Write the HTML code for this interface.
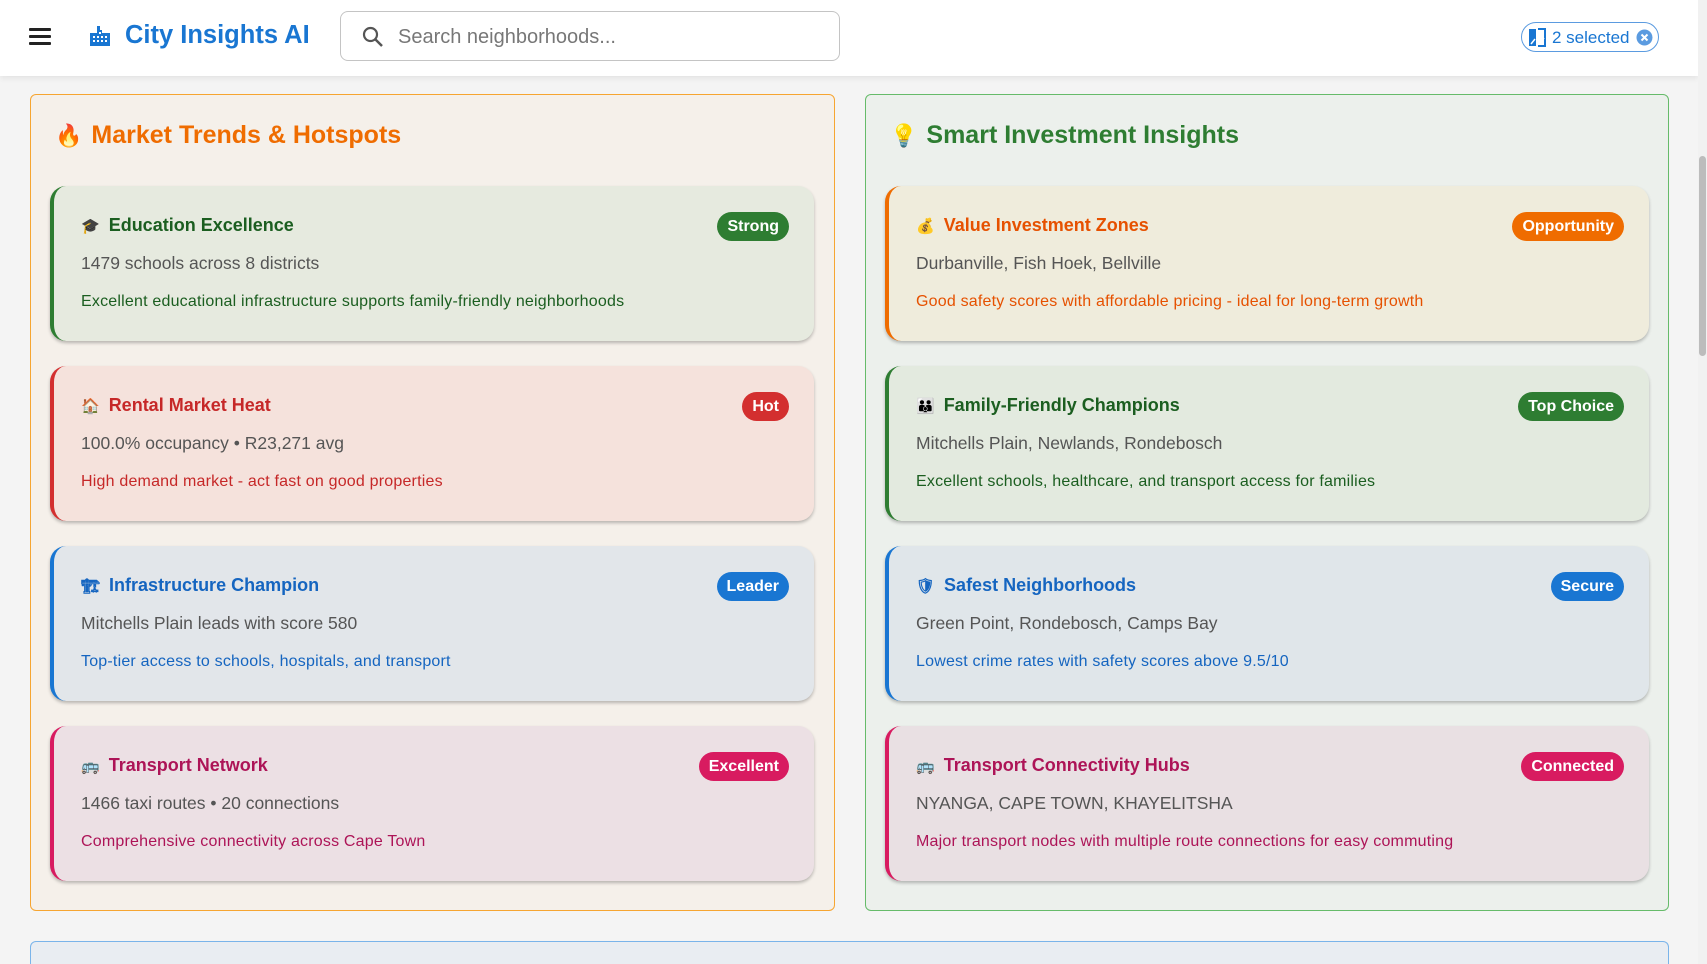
<!DOCTYPE html>
<html style="overflow:hidden;height:964px"><head><meta charset="utf-8"><style>
*{box-sizing:border-box;margin:0;padding:0}
body{width:1707px;height:964px;overflow:hidden;background:#f4f4f4;font-family:"Liberation Sans",sans-serif;position:relative}
.hdr{position:absolute;left:0;top:0;width:1698px;height:76px;background:#fff;box-shadow:0 2px 6px rgba(0,0,0,.08)}
.ham{position:absolute;left:29px;top:28px;width:22px}
.ham i{display:block;height:3px;background:#222;margin-bottom:4px;border-radius:1px}
.title{position:absolute;left:125px;top:21px;font-size:25.5px;font-weight:700;color:#1976d2}
.search{position:absolute;left:340px;top:11px;width:500px;height:50px;border:1px solid #c4c4c4;border-radius:8px;background:#fff}
.search span{position:absolute;left:57px;top:14px;font-size:20px;color:#777}
.chip{position:absolute;left:1521px;top:22px;width:138px;height:30px;border:1px solid #5b9be0;border-radius:15px}
.chip span{position:absolute;left:30px;top:5px;font-size:17px;color:#1976d2}
.panel{position:absolute;top:94px;height:817px;border-radius:6px}
.p1{left:30px;width:805px;background:#f5f0ea;border:1px solid #f6a531}
.p2{left:865px;width:804px;background:#ecf0ec;border:1px solid #66bb6a}
.ph{position:absolute;left:24px;top:26px;font-size:25px;font-weight:700}
.ph b{font-weight:400;margin-right:9px;font-size:22px}
.card{position:absolute;left:19px;width:764px;height:155px;border-radius:16px;border-left:4px solid;box-shadow:0 2px 3px rgba(0,0,0,.25)}
.ct{position:absolute;left:27px;top:29px;font-size:18px;font-weight:700}
.ct b{font-size:15px;margin-right:9px}
.c2{position:absolute;left:27px;top:67px;font-size:17.5px;color:#555}
.c3{position:absolute;left:27px;top:107px;font-size:16px;letter-spacing:.2px}
.bd{position:absolute;right:25px;top:26px;height:29px;padding:0 10px;border-radius:15px;color:#fff;font-weight:700;font-size:16px;line-height:29px}
.bot{position:absolute;left:30px;top:941px;width:1639px;height:23px;border:1px solid #7ab4ea;border-bottom:none;border-radius:6px 6px 0 0;background:#e9edf2}
.sb{position:absolute;left:1698px;top:0;width:9px;height:964px;background:#f1f1f1}
.sb i{position:absolute;left:1px;top:156px;width:7px;height:200px;background:#bcbcbc;border-radius:4px}
</style></head><body>
<div class="hdr">
<div class="ham"><i></i><i></i><i></i></div>
<svg style="position:absolute;left:88px;top:24px" width="24" height="24" viewBox="0 0 24 24"><path fill="#1976d2" d="M9 2h3v4h2v3h8v13H2V9h7zM5 12v2h2v-2zm0 4v2h2v-2zm4-4v2h2v-2zm0 4v2h2v-2zm4-4v2h2v-2zm0 4v2h2v-2zm4-4v2h2v-2zm0 4v2h2v-2zM11 8v2h2V8z"/></svg>
<div class="title">City Insights AI</div>
<div class="search"><svg style="position:absolute;left:20px;top:13px" width="24" height="24" viewBox="0 0 24 24"><circle cx="9.5" cy="9.5" r="6.5" fill="none" stroke="#555" stroke-width="2.2"/><path d="M14.5 14.5L21 21" stroke="#555" stroke-width="2.5"/></svg><span>Search neighborhoods...</span></div>
<div class="chip"><svg style="position:absolute;left:6px;top:5px" width="18" height="19" viewBox="0 0 18 19"><rect x="1" y="1" width="7" height="17" fill="#1976d2"/><path d="M10 1h7v17h-7" fill="none" stroke="#1976d2" stroke-width="2"/><path d="M3 16l4-5M12 15l4-5" stroke="#fff" stroke-width="1.5"/></svg><span>2 selected</span><svg style="position:absolute;right:5px;top:6px" width="17" height="17" viewBox="0 0 17 17"><circle cx="8.5" cy="8.5" r="8" fill="#5b9be0"/><path d="M5.5 5.5l6 6M11.5 5.5l-6 6" stroke="#fff" stroke-width="2"/></svg></div>
</div>

<div class="panel p1">
<div class="ph" style="color:#ef6c00"><b>🔥</b>Market Trends &amp; Hotspots</div>
<div class="card" style="top:91px;background:#e6eadf;border-color:#2e7d32"><div class="ct" style="color:#1b5e20"><b>🎓</b>Education Excellence</div><div class="c2">1479 schools across 8 districts</div><div class="c3" style="color:#1b5e20">Excellent educational infrastructure supports family-friendly neighborhoods</div><div class="bd" style="background:#2e7d32">Strong</div></div>
<div class="card" style="top:271px;background:#f5e2dc;border-color:#d32f2f"><div class="ct" style="color:#c62828"><b>🏠</b>Rental Market Heat</div><div class="c2">100.0% occupancy • R23,271 avg</div><div class="c3" style="color:#c62828">High demand market - act fast on good properties</div><div class="bd" style="background:#d32f2f">Hot</div></div>
<div class="card" style="top:451px;background:#e2e6ea;border-color:#1976d2"><div class="ct" style="color:#1565c0"><b>🏗</b>Infrastructure Champion</div><div class="c2">Mitchells Plain leads with score 580</div><div class="c3" style="color:#1565c0">Top-tier access to schools, hospitals, and transport</div><div class="bd" style="background:#1976d2">Leader</div></div>
<div class="card" style="top:631px;background:#ece0e4;border-color:#d81b60"><div class="ct" style="color:#ad1457"><b>🚌</b>Transport Network</div><div class="c2">1466 taxi routes • 20 connections</div><div class="c3" style="color:#ad1457">Comprehensive connectivity across Cape Town</div><div class="bd" style="background:#d81b60">Excellent</div></div>
</div>

<div class="panel p2">
<div class="ph" style="color:#2e7d32"><b>💡</b>Smart Investment Insights</div>
<div class="card" style="top:91px;background:#efecdc;border-color:#ef6c00"><div class="ct" style="color:#e65100"><b>💰</b>Value Investment Zones</div><div class="c2">Durbanville, Fish Hoek, Bellville</div><div class="c3" style="color:#e65100">Good safety scores with affordable pricing - ideal for long-term growth</div><div class="bd" style="background:#ef6c00">Opportunity</div></div>
<div class="card" style="top:271px;background:#e3eadf;border-color:#2e7d32"><div class="ct" style="color:#1b5e20"><b>👪</b>Family-Friendly Champions</div><div class="c2">Mitchells Plain, Newlands, Rondebosch</div><div class="c3" style="color:#1b5e20">Excellent schools, healthcare, and transport access for families</div><div class="bd" style="background:#2e7d32">Top Choice</div></div>
<div class="card" style="top:451px;background:#e0e6ea;border-color:#1976d2"><div class="ct" style="color:#1565c0"><b>🛡</b>Safest Neighborhoods</div><div class="c2">Green Point, Rondebosch, Camps Bay</div><div class="c3" style="color:#1565c0">Lowest crime rates with safety scores above 9.5/10</div><div class="bd" style="background:#1976d2">Secure</div></div>
<div class="card" style="top:631px;background:#e9e0e3;border-color:#d81b60"><div class="ct" style="color:#ad1457"><b>🚌</b>Transport Connectivity Hubs</div><div class="c2">NYANGA, CAPE TOWN, KHAYELITSHA</div><div class="c3" style="color:#ad1457">Major transport nodes with multiple route connections for easy commuting</div><div class="bd" style="background:#d81b60">Connected</div></div>
</div>

<div class="bot"></div>
<div class="sb"><i></i></div>
</body></html>
